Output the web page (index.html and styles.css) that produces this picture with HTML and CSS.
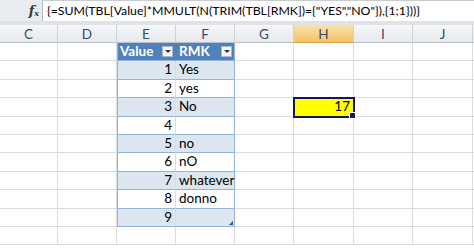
FILE: index.html
```html
<!DOCTYPE html>
<html>
<head>
<meta charset="utf-8">
<link rel="stylesheet" href="styles.css">
</head>
<body>

<div class="formula-bar">
  <div class="fx-box"><span class="fx">f<sub>x</sub></span></div>
  <div class="formula">{=SUM(TBL[Value]*MMULT(N(TRIM(TBL[RMK])={"YES","NO"}),{1;1}))}</div>
</div>

<div class="sheet">
  <div class="colhead">C</div>
  <div class="colhead">D</div>
  <div class="colhead">E</div>
  <div class="colhead">F</div>
  <div class="colhead">G</div>
  <div class="colhead active">H</div>
  <div class="colhead">I</div>
  <div class="colhead">J</div>
  <div class="colhead last"></div>

  <!-- table header row -->
  <div class="cell"></div>
  <div class="cell"></div>
  <div class="cell th first">Value<span class="drop"></span></div>
  <div class="cell th end">RMK<span class="drop"></span></div>
  <div class="cell"></div>
  <div class="cell"></div>
  <div class="cell"></div>
  <div class="cell"></div>
  <div class="cell last"></div>

  <div class="cell"></div>
  <div class="cell"></div>
  <div class="cell td band first num">1</div>
  <div class="cell td band end">Yes</div>
  <div class="cell"></div>
  <div class="cell"></div>
  <div class="cell"></div>
  <div class="cell"></div>
  <div class="cell last"></div>

  <div class="cell"></div>
  <div class="cell"></div>
  <div class="cell td first num">2</div>
  <div class="cell td end">yes</div>
  <div class="cell"></div>
  <div class="cell"></div>
  <div class="cell"></div>
  <div class="cell"></div>
  <div class="cell last"></div>

  <div class="cell"></div>
  <div class="cell"></div>
  <div class="cell td band first num">3</div>
  <div class="cell td band end">No</div>
  <div class="cell"></div>
  <div class="cell result">17<span class="handle"></span></div>
  <div class="cell"></div>
  <div class="cell"></div>
  <div class="cell last"></div>

  <div class="cell"></div>
  <div class="cell"></div>
  <div class="cell td first num">4</div>
  <div class="cell td end"></div>
  <div class="cell"></div>
  <div class="cell"></div>
  <div class="cell"></div>
  <div class="cell"></div>
  <div class="cell last"></div>

  <div class="cell"></div>
  <div class="cell"></div>
  <div class="cell td band first num">5</div>
  <div class="cell td band end">no</div>
  <div class="cell"></div>
  <div class="cell"></div>
  <div class="cell"></div>
  <div class="cell"></div>
  <div class="cell last"></div>

  <div class="cell"></div>
  <div class="cell"></div>
  <div class="cell td first num">6</div>
  <div class="cell td end">nO</div>
  <div class="cell"></div>
  <div class="cell"></div>
  <div class="cell"></div>
  <div class="cell"></div>
  <div class="cell last"></div>

  <div class="cell"></div>
  <div class="cell"></div>
  <div class="cell td band first num">7</div>
  <div class="cell td band end">whatever</div>
  <div class="cell"></div>
  <div class="cell"></div>
  <div class="cell"></div>
  <div class="cell"></div>
  <div class="cell last"></div>

  <div class="cell"></div>
  <div class="cell"></div>
  <div class="cell td first num">8</div>
  <div class="cell td end">donno</div>
  <div class="cell"></div>
  <div class="cell"></div>
  <div class="cell"></div>
  <div class="cell"></div>
  <div class="cell last"></div>

  <div class="cell"></div>
  <div class="cell"></div>
  <div class="cell td band first num">9</div>
  <div class="cell td band end"><span class="resize"></span></div>
  <div class="cell"></div>
  <div class="cell"></div>
  <div class="cell"></div>
  <div class="cell"></div>
  <div class="cell last"></div>

  <div class="cell"></div>
  <div class="cell"></div>
  <div class="cell"></div>
  <div class="cell"></div>
  <div class="cell"></div>
  <div class="cell"></div>
  <div class="cell"></div>
  <div class="cell"></div>
  <div class="cell last"></div>
</div>

</body>
</html>
```

FILE: styles.css
```css
body {
  margin: 0;
  width: 474px;
  height: 248px;
  overflow: hidden;
  background: #fff;
  font-family: "Lato", "Liberation Sans", sans-serif;
  font-size: 13.5px;
  color: #000;
}

/* formula bar */
.formula-bar {
  display: flex;
  height: 21px;
  background: #e8ebef;
  border-bottom: 4px solid #dfe3e8;
}

.fx-box {
  width: 42px;
  display: flex;
  justify-content: flex-end;
  align-items: center;
  padding-right: 2px;
  box-sizing: border-box;
}

.fx {
  font-family: "DejaVu Serif", serif;
  font-style: italic;
  font-weight: bold;
  font-size: 13px;
  color: #3a3a3a;
  margin-right: 1px;
}

.fx sub {
  font-size: 8px;
  vertical-align: -1px;
}

.formula {
  flex: 1;
  background: #fff;
  border-left: 1px solid #b7bcc3;
  border-top: 1px solid #c8ccd1;
  padding-left: 4px;
  line-height: 19px;
  font-size: 12.3px;
  white-space: nowrap;
  overflow: hidden;
}

/* grid */
.sheet {
  display: grid;
  grid-template-columns: 58px 59px 59px 59px 59px 60px 59px 60px 1fr;
  grid-template-rows: 18px;
  grid-auto-rows: 18.4px;
}

.colhead {
  background: linear-gradient(#f6f7f9, #e6e9ee);
  border-right: 1px solid #cdd2d8;
  border-bottom: 1px solid #b9bec6;
  color: #3b4a5f;
  text-align: center;
  line-height: 18px;
  font-size: 13.5px;
}

.colhead.active {
  background: linear-gradient(#fae2a8, #f3c36a);
  border-bottom-color: #d9a440;
}

.colhead.last, .cell.last { border-right: none; }

.cell {
  border-right: 1px solid #dadcdd;
  border-bottom: 1px solid #dadcdd;
  line-height: 17.4px;
  padding: 0 3px;
  white-space: nowrap;
  position: relative;
}

/* table */
.th {
  background: #4f81bd;
  color: #fff;
  font-weight: bold;
  border-right-color: #4f81bd;
  border-bottom-color: #95b3d7;
}

.td {
  border-bottom-color: #95b3d7;
  border-right-color: #d4deeb;
}

.band { background: #dce6f1; }

.first { box-shadow: inset 1px 0 #95b3d7; }
.end { border-right-color: #95b3d7; }
.th.end { border-right-color: #95b3d7; }

.num { text-align: right; }

.drop {
  position: absolute;
  right: 2px;
  top: 3px;
  width: 11px;
  height: 11px;
  background: #f6f6f6;
  border: 1px solid #a8b8cc;
  box-sizing: border-box;
}

.drop::after {
  content: "";
  position: absolute;
  left: 2px;
  top: 3px;
  border-left: 3px solid transparent;
  border-right: 3px solid transparent;
  border-top: 3px solid #333;
}

.resize {
  position: absolute;
  right: 1px;
  bottom: 1px;
  width: 0;
  height: 0;
  border-left: 4px solid transparent;
  border-bottom: 4px solid #2f4d8a;
}

.result {
  background: #ffff00;
  text-align: right;
  outline: 2px solid #141466;
  outline-offset: -1px;
  z-index: 1;
}

.handle {
  position: absolute;
  right: -3px;
  bottom: -3px;
  width: 5px;
  height: 5px;
  background: #141466;
  border: 1px solid #fff;
}
```
